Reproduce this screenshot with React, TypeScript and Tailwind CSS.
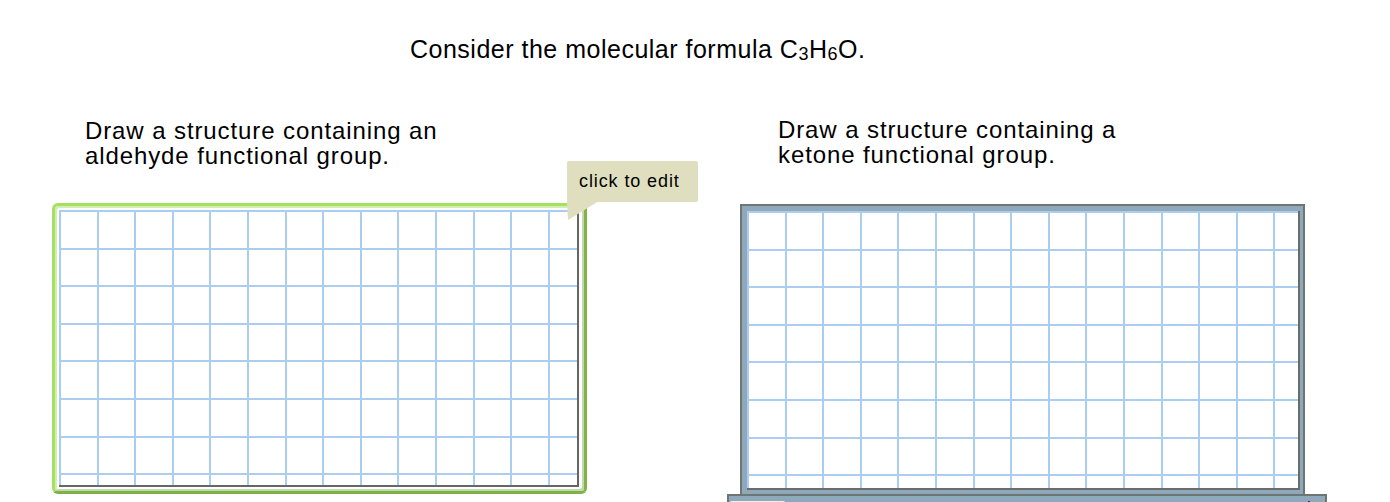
const STEP = 37.6;

function Grid({ w, h }: { w: number; h: number }) {
  const xs: number[] = [];
  for (let x = 0; x < w; x += STEP) xs.push(Math.round(x));
  const ys: number[] = [];
  for (let y = 0; y < h; y += STEP) ys.push(Math.round(y));
  return (
    <svg width={w} height={h} className="block">
      <rect width={w} height={h} fill="#ffffff" />
      {xs.map((x) => (
        <rect key={"v" + x} x={x} y={0} width={2} height={h} fill="#abcdf0" />
      ))}
      {ys.map((y) => (
        <rect key={"h" + y} x={0} y={y} width={w} height={2} fill="#abcdf0" />
      ))}
    </svg>
  );
}

export default function App() {
  return (
    <div className="w-[1390px] h-[502px] overflow-hidden bg-white text-black font-['Liberation_Sans',Arial,sans-serif]">
      <div className="pt-[36px] pl-[410px] text-[25px] leading-[26px] tracking-[0.5px]">
        Consider the molecular formula C
        <sub className="text-[18px] align-baseline bottom-[-2px]">3</sub>H
        <sub className="text-[18px] align-baseline bottom-[-2px]">6</sub>O.
      </div>

      <div className="flex mt-[56px]">
        {/* aldehyde column */}
        <div className="relative ml-[52px] w-[535px]">
          <p className="pl-[33px] text-[24px] leading-[25px] tracking-[0.9px]">
            Draw a structure containing an
            <br />
            aldehyde functional group.
          </p>
          <div className="mt-[35px] w-[535px] h-[291px] rounded-[6px] border-[3px] border-[#a5e063] border-r-[#80b545] border-b-[#7db342] shadow-[inset_2px_2px_0_#d0efb0,inset_-2px_-2px_0_#c4d6b2] pt-[4px] pl-[4px]">
            <div className="w-[520px] h-[277px] border-r-2 border-b-2 border-[#666666]">
              <Grid w={518} h={275} />
            </div>
          </div>

          <div className="absolute left-[515px] top-[43px]">
            <div className="w-[131px] h-[41px] rounded-[2px] bg-[#dfdfbf] pl-[12px] flex items-center text-[18px] tracking-[0.9px]">
              click to edit
            </div>
            <svg width="34" height="20" className="block -mt-px">
              <polygon points="0,0 32,0 1,19" fill="#dfdfbf" />
            </svg>
          </div>
        </div>

        {/* ketone column */}
        <div className="relative ml-[140px] w-[600px]">
          <p className="pl-[51px] text-[24px] leading-[25px] tracking-[0.9px] -mt-px">
            Draw a structure containing a
            <br />
            ketone functional group.
          </p>
          <div className="ml-[13px] mt-[37px] w-[565px] h-[290px] border-t-2 border-x-2 border-[#6e7673] bg-[#8fa8bc] pt-[5px] pl-[5px]">
            <div className="w-[553px] h-[279px] border-r-2 border-b-2 border-[#6b6b6b]">
              <Grid w={551} h={277} />
            </div>
          </div>
          <div className="relative w-[600px] h-[40px] border-t-2 border-x-2 border-[#6e7673] bg-[#8fa9bc] pl-px pt-[5px]">
            <div className="w-[55px] h-[20px] rounded-[2px] bg-[#dcdccb] border-t border-[#f0f0e4]" />
            <span className="absolute left-[579px] top-[5px] w-[2px] h-[4px] bg-[#8b1a2a]" />
          </div>
        </div>
      </div>
    </div>
  );
}
